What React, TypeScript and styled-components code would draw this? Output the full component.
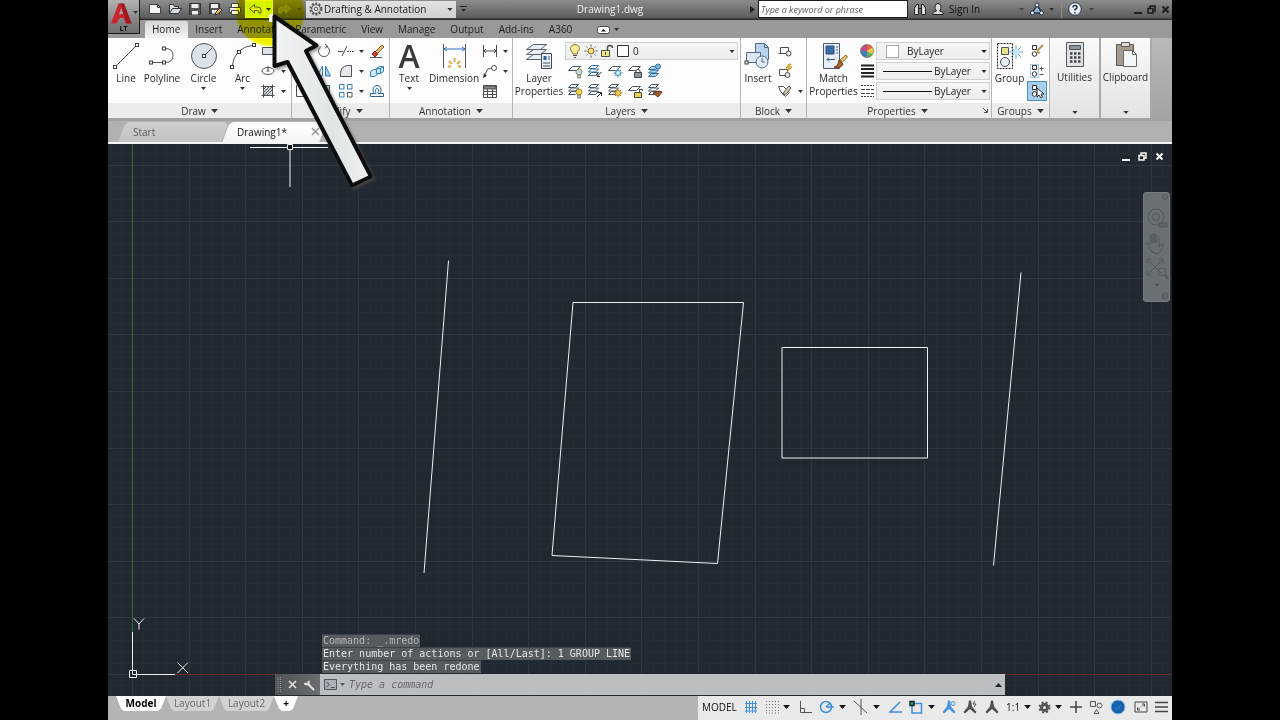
import React from 'react';
import styled, { createGlobalStyle, css } from 'styled-components';

const GlobalStyle = createGlobalStyle`
  * { box-sizing: border-box; }
  html, body { margin: 0; background: #000; }
  body, button, input, select {
    font-family: "Open Sans", "Noto Sans", sans-serif;
    font-size: 10px;
    color: #2b2b2b;
  }
  button { border: 0; padding: 0; background: none; white-space: nowrap; }
  svg { display: block; flex: none; }
`;

/* ---------- shell ---------- */

const Page = styled.div`
  min-height: 100vh;
  padding: 0 108px;
  background: #000;
  display: flex;
`;

const Window = styled.main`
  position: relative;
  flex: 1;
  min-width: 0;
  display: flex;
  flex-direction: column;
  overflow: hidden;
  background: #b1b1b1;
`;

const Header = styled.header`
  display: grid;
  grid-template-columns: 32px minmax(0, 1fr);
  background: linear-gradient(#8c8c8c 0, #5c5c5c 18px, #2e2e2e 19px, #2e2e2e 20px, #999 20px);
`;

const AppButton = styled.button`
  height: 34px;
  display: flex;
  flex-direction: column;
  border: 1px solid #1a1a1a;
  border-left: 0;
  border-top: 0;
  background: linear-gradient(#b4b4b4, #7d7d7d 24px, #707070);
`;

const AppRow = styled.span`
  display: flex;
  align-items: center;
  gap: 1px;
  height: 25px;
  padding-left: 2px;
`;

const AppEdition = styled.span`
  width: 31px;
  font-size: 7px;
  line-height: 8px;
  font-weight: 700;
  text-align: center;
  color: #111;
`;

const TitleRow = styled.div`
  display: flex;
  align-items: center;
  height: 20px;
  padding-bottom: 2px;
`;

const QuickAccess = styled.div`
  display: flex;
  align-items: center;
  padding-left: 5px;
`;

const QuickButton = styled.button<{ $w?: number; $lit?: boolean }>`
  width: ${(p) => p.$w ?? 20}px;
  height: 18px;
  display: grid;
  place-items: center;
  ${(p) => p.$lit && css`
    background: #dcff5a;
    border: 1px solid #f8ffc8;
  `}
`;

const Workspace = styled.label`
  display: flex;
  align-items: center;
  gap: 1px;
  width: 150px;
  height: 17px;
  padding: 0 3px 0 3px;
  margin-left: 4px;
  background: linear-gradient(#e2e2e2, #cfcfcf);
`;

const PlainSelect = styled.select`
  appearance: none;
  flex: 1;
  min-width: 0;
  height: 16px;
  padding: 0;
  border: 0;
  outline: 0;
  background: transparent;
  color: #1c1c1c;
  line-height: 16px;
`;

const DocTitle = styled.h1`
  flex: 1;
  margin: 0;
  font-size: 10px;
  line-height: 18px;
  font-weight: 400;
  text-align: center;
  color: #f0f0f0;
`;

const Search = styled.input`
  width: 150px;
  height: 18px;
  margin-left: 3px;
  padding: 0 2px;
  border: 1px solid #1c1c1c;
  background: #fff;
  font-size: 9px;
  font-style: italic;
  &::placeholder { color: #5c5c5c; opacity: 1; }
`;

const TitleTools = styled.div`
  display: flex;
  align-items: center;
`;

const SignIn = styled.button`
  display: flex;
  align-items: center;
  gap: 4px;
  width: 82px;
  color: #0e0e0e;
`;

const Divider = styled.span`
  width: 1px;
  height: 18px;
  background: #8a8a8a;
  margin: 0 3px;
`;

const WindowButtons = styled.div<{ $gap: number }>`
  display: flex;
  align-items: center;
  gap: ${(p) => p.$gap}px;
`;

const WindowCorner = styled.div`
  display: flex;
  justify-content: flex-end;
  width: 75px;
  padding-right: 2px;
`;

/* ---------- ribbon ---------- */

const TabRow = styled.nav`
  display: flex;
  align-items: flex-end;
  height: 18px;
  padding-left: 5px;
`;

const RibbonTab = styled.button<{ $active?: boolean }>`
  height: 17px;
  padding: 0 8px 0 7px;
  line-height: 15px;
  color: #1e1e1e;
  border-radius: 2px 2px 0 0;
  background: ${(p) => (p.$active ? 'linear-gradient(#d6d6d6, #f4f4f4)' : 'transparent')};
`;

const RibbonToggle = styled.button`
  display: flex;
  align-items: center;
  gap: 4px;
  height: 17px;
  padding: 0 0 0 17px;
`;

const Ribbon = styled.section`
  display: flex;
  height: 83px;
  padding-bottom: 3px;
  background: linear-gradient(#b9b9b9, #a2a2a2);
`;

const Panel = styled.div<{ $w: number }>`
  display: flex;
  flex-direction: column;
  flex: none;
  width: ${(p) => p.$w}px;
  border-right: 1px solid #b4b4b4;
  background: #fdfdfd;
`;

const PanelBody = styled.div`
  display: flex;
  height: 65px;
  padding-top: 3px;
`;

const PanelLabel = styled.button`
  display: flex;
  align-items: center;
  justify-content: center;
  gap: 5px;
  height: 15px;
  background: #ececec;
  line-height: 14px;
  color: #333;
`;

const LaunchLabel = styled(PanelLabel)`
  display: grid;
  grid-template-columns: 1fr auto 1fr;
  padding: 0 3px 0 0;
  gap: 0;
`;

const LabelText = styled.span<{ $end?: boolean }>`
  grid-column: ${(p) => (p.$end ? 3 : 2)};
  justify-self: ${(p) => (p.$end ? 'end' : 'center')};
  display: flex;
  align-items: center;
  gap: 5px;
`;

const Collapsed = styled.button<{ $w: number }>`
  display: flex;
  flex-direction: column;
  align-items: center;
  flex: none;
  width: ${(p) => p.$w}px;
  padding: 3px 0 4px;
  border-right: 2px solid #a9a9a9;
  background: linear-gradient(#fafafa, #e3e3e3);
  line-height: 16px;
  & > svg:last-child { margin-top: auto; }
`;

const Big = styled.button<{ $w: number }>`
  display: flex;
  flex-direction: column;
  align-items: center;
  flex: none;
  width: ${(p) => p.$w}px;
  height: 60px;
`;

const BigLabel = styled.span`
  margin: 1px 0 2px;
  line-height: 13px;
  white-space: pre-line;
  text-align: center;
`;

const Tools = styled.div<{ $cols: string }>`
  display: grid;
  grid-template-columns: ${(p) => p.$cols};
  grid-auto-rows: 20px;
`;

const Tool = styled.button<{ $on?: boolean }>`
  display: flex;
  align-items: center;
  justify-content: flex-start;
  gap: 5px;
  padding-left: 2px;
  ${(p) => p.$on && css`
    padding-left: 1px;
    border: 1px solid #4f8fc0;
    background: #a9cdec;
  `}
`;

const LayerArea = styled.div`
  display: flex;
  flex-direction: column;
  flex: 1;
  padding-right: 2px;
`;

const Combo = styled.label<{ $gap: number; $inset?: number }>`
  display: flex;
  align-items: center;
  gap: ${(p) => p.$gap}px;
  height: 18px;
  margin: 1px 0;
  padding: 0 2px 0 ${(p) => p.$inset ?? 6}px;
  border: 1px solid #d0d0d0;
  background: linear-gradient(#f6f6f6, #ededed);
`;

const Swatch = styled.span`
  width: 13px;
  height: 13px;
  border: 1px solid #a8a8a8;
  background: #fff;
`;

const PropertyGrid = styled.div`
  display: grid;
  grid-template-columns: 16px minmax(0, 1fr);
  grid-auto-rows: 20px;
  align-items: center;
  flex: 1;
  padding-right: 1px;
`;

/* ---------- document tabs ---------- */

const DocTabs = styled.nav`
  display: flex;
  height: 23px;
  padding: 1px 0 0 14px;
  border-bottom: 2px solid #f4f4f4;
  background: #b1b1b1;
`;

const DocTab = styled.button<{ $active?: boolean }>`
  position: relative;
  display: flex;
  align-items: center;
  justify-content: space-between;
  width: ${(p) => (p.$active ? 97 : 104)}px;
  padding: 0 3px 1px 11px;
  color: ${(p) => (p.$active ? '#141414' : '#5a5a5a')};
  z-index: 0;
  &::before {
    content: '';
    position: absolute;
    inset: 0 ${(p) => (p.$active ? 0 : 1)}px 0 0;
    z-index: -1;
    transform: skewX(-20deg);
    border-radius: 5px 5px 0 0;
    background: ${(p) => (p.$active ? 'linear-gradient(#fff, #f4f4f4)' : 'linear-gradient(#d0d0d0, #c2c2c2)')};
  }
`;

/* ---------- drawing area ---------- */

const Viewport = styled.section`
  position: relative;
  flex: 1;
  min-height: 552px;
  background: #212830;
`;

const Scene = styled.svg`
  position: absolute;
  inset: 0;
  width: 100%;
  height: 100%;
`;

const ViewportControls = styled.div`
  position: absolute;
  top: 8px;
  right: 8px;
`;

const NavBar = styled.div`
  position: absolute;
  top: 48px;
  right: 2px;
  width: 27px;
  height: 110px;
  border-radius: 3px;
  border: 1px solid #747a7e;
  background: #696f73;
`;

const CommandWindow = styled.form`
  position: absolute;
  left: 167px;
  right: 167px;
  bottom: 1px;
  margin: 0;
`;

const History = styled.ol`
  margin: 0 0 0 47px;
  padding: 0;
  list-style: none;
`;

const HistoryLine = styled.li<{ $old?: boolean }>`
  width: fit-content;
  padding: 0 1px;
  border-top: 1px solid #3a4147;
  font-family: "DejaVu Sans Mono", monospace;
  font-size: 10px;
  line-height: 12px;
  color: ${(p) => (p.$old ? '#b4b7b9' : '#e4e6e8')};
  background: #565b5f;
`;

const CommandBar = styled.div`
  display: flex;
  height: 21px;
  margin-top: 1px;
  background: #bcbfc2;
`;

const CommandGrip = styled.div`
  display: flex;
  align-items: center;
  justify-content: space-between;
  width: 45px;
  padding: 0 5px 0 2px;
  background: linear-gradient(90deg, #4f5356, #6a6e71);
`;

const CommandField = styled.label`
  display: flex;
  align-items: center;
  gap: 3px;
  flex: 1;
  padding: 0 3px 0 4px;
`;

const CommandInput = styled.input`
  flex: 1;
  height: 19px;
  padding: 0 0 0 1px;
  border: 0;
  outline: 0;
  background: transparent;
  font-family: "DejaVu Sans Mono", monospace;
  font-size: 10px;
  font-style: italic;
  &::placeholder { color: #65696c; opacity: 1; }
`;

/* ---------- status bar ---------- */

const StatusBar = styled.footer`
  display: flex;
  justify-content: space-between;
  height: 24px;
  background: #b4b4b4;
`;

const LayoutTabs = styled.nav`
  display: flex;
  align-items: flex-start;
  padding-left: 8px;
`;

const LayoutTab = styled.button<{ $w: number; $active?: boolean }>`
  width: ${(p) => p.$w}px;
  height: 15px;
  line-height: 15px;
  clip-path: polygon(0 0, 100% 0, calc(100% - 5px) 85%, calc(100% - 8px) 100%, 8px 100%, 5px 85%);
  background: ${(p) => (p.$active ? '#fff' : '#d2d2d2')};
  color: ${(p) => (p.$active ? '#000' : '#6a6a6a')};
  font-weight: ${(p) => (p.$active ? 700 : 400)};
`;

const StatusTools = styled.div`
  display: flex;
  align-items: center;
  justify-content: space-between;
  width: 474px;
  padding: 0 4px 2px 4px;
  background: #e9e9e9;
`;

const StatusButton = styled.button`
  display: flex;
  align-items: center;
  gap: 4px;
  height: 20px;
  color: #111;
`;

const Overlay = styled.svg<{ $blend?: boolean }>`
  position: absolute;
  top: 0;
  left: 120px;
  pointer-events: none;
  z-index: 2;
  mix-blend-mode: ${(p) => (p.$blend ? 'multiply' : 'normal')};
`;

/* ---------- icons ---------- */

type IconProps = { w?: number; h?: number; sw?: number; color?: string; children: React.ReactNode };
const Icon = ({ w = 16, h = 16, sw = 1, color = '#4a4f55', children }: IconProps) => (
  <svg width={w} height={h} viewBox={`0 0 ${w} ${h}`} fill="none" stroke={color} strokeWidth={sw} aria-hidden="true">
    {children}
  </svg>
);

const Caret = ({ w = 5, color = '#333' }: { w?: number; color?: string }) => (
  <svg width={w} height={Math.ceil(w / 2)} viewBox="0 0 6 3.5" aria-hidden="true">
    <path d="M0 0h6L3 3.5z" fill={color} />
  </svg>
);

const Node = ({ x, y }: { x: number; y: number }) => (
  <rect x={x - 1.5} y={y - 1.5} width="3" height="3" fill="#fff" stroke="#3b3b3b" />
);

const Sheets = ({ y = 0, c = '#4a5664', f = '#fff' }: { y?: number; c?: string; f?: string }) => (
  <g stroke={c} fill={f} transform={`translate(0 ${y})`}>
    <path d="M1.5 11.5l3-3h7l-3 3z" />
    <path d="M1.5 8l3-3h7l-3 3z" />
    <path d="M1.5 4.5l3-3h7l-3 3z" />
  </g>
);

const OneSheet = () => <path d="M1.5 7.5l4-4h8l-4 4z" stroke="#4a5664" fill="#fff" />;

const Bulb = ({ x, y, c = '#f3d34a' }: { x: number; y: number; c?: string }) => (
  <g transform={`translate(${x} ${y})`}>
    <circle r="3" fill={c} stroke="#8d7a2a" strokeWidth=".8" />
    <path d="M-1.5 3h3v3h-3z" fill="#c9c9c9" stroke="#666" strokeWidth=".7" />
  </g>
);

const WinMin = ({ c }: { c: string }) => <Icon w={9} h={9} color={c} sw={2}><path d="M1 8h8" /></Icon>;
const WinRestore = ({ c }: { c: string }) => (
  <Icon w={9} h={9} color={c} sw={1.5}><path d="M1 3.5h5v4.500h-5zM3 3V1h5v5H6" /></Icon>
);
const WinClose = ({ c }: { c: string }) => <Icon w={9} h={9} color={c} sw={2}><path d="M1.500 1.500l6 6M7.500 1.500l-6 6" /></Icon>;

const Cube = () => (
  <g stroke="#2f7fb8" fill="#cfe6f6"><path d="M1.500 8.500l3-2h4v5l-3 2h-4z" /><path d="M7.500 5.500l3-2h4v5l-3 2h-4z" /><path d="M7.500 5.500h4v5M11.500 5.500l3-2" /></g>
);

const Spark = ({ c = '#e8b32e', s = '#b98314' }: { c?: string; s?: string }) => (
  <g stroke={s}><path d="M11 5.500v9M6.500 10h9M8 7l6 6M14 7l-6 6" /><circle cx="11" cy="10" r="2.500" fill={c} /></g>
);

const Lock = ({ c, open }: { c: string; open?: boolean }) => (
  <g stroke="#444"><path d="M7.500 9.500h7v5h-7z" fill={c} /><path d={open ? 'M12.500 9V6.500h3v1.500' : 'M9 9V7.500q2-2.500 4 0V9'} /></g>
);

const Pair = () => <g stroke="#333"><path d="M3.500 2.500h4v4h-4z" fill="#fff" /><circle cx="5.500" cy="11" r="2.300" fill="#fff" /></g>;

const Compass = ({ c, mark }: { c: string; mark?: React.ReactNode }) => (
  <Icon w={14} h={14} color={c}>
    <path d="M6 0.500h2l1 6 4.500 5.500-1.500 1.500L7 9l-5 4.500L.5 12 5 6.500z" fill={c} stroke="none" />
    {mark}
  </Icon>
);

/* ---------- panels ---------- */

const DrawPanel = () => (
  <Panel $w={184}>
    <PanelBody>
      <Big $w={36}>
        <Icon w={30} h={30}><path d="M4 26L26 4" stroke="#555" /><Node x={4} y={26} /><Node x={26} y={4} /></Icon>
        <BigLabel>Line</BigLabel>
      </Big>
      <Big $w={36}>
        <Icon w={30} h={30}><path d="M4 21.500h14q8 0 8-7t-8-7" stroke="#555" /><Node x={4} y={21.500} /><Node x={17} y={21.500} /><Node x={17} y={7.500} /></Icon>
        <BigLabel>Polyline</BigLabel>
      </Big>
      <Big $w={47}>
        <Icon w={30} h={30}><circle cx="15" cy="15" r="12.500" fill="#dde3ea" stroke="#4b5057" /><path d="M15 15l8-8" /><Node x={15} y={15} /></Icon>
        <BigLabel>Circle</BigLabel><Caret />
      </Big>
      <Big $w={31}>
        <Icon w={30} h={30}><path d="M4 26Q6 6 26 4" stroke="#555" /><Node x={4} y={26} /><Node x={11} y={11} /><Node x={26} y={4} /></Icon>
        <BigLabel>Arc</BigLabel><Caret />
      </Big>
      <Tools $cols="30px">
        <Tool aria-label="Rectangle"><Icon><path d="M2.500 4.500h11v7h-11z" fill="#dde3ea" /></Icon><Caret /></Tool>
        <Tool aria-label="Ellipse"><Icon><ellipse cx="8" cy="8" rx="6" ry="3.500" /><path d="M8 3v5M6.500 8h3" /></Icon><Caret /></Tool>
        <Tool aria-label="Hatch"><Icon><path d="M3.500 3.500h9v9h-9z" fill="#d6dade" /><path d="M3 7l4-4M3 10l7-7M4 12l8-8M7 12l5-5M1.500 3.500h2v-2M14.500 3.500h-2v-2M1.500 12.500h2v2M14.500 12.500h-2v2" /></Icon><Caret /></Tool>
      </Tools>
    </PanelBody>
    <PanelLabel>Draw <Caret w={7} /></PanelLabel>
  </Panel>
);

const ModifyPanel = () => (
  <Panel $w={98}>
    <PanelBody>
      <Tools $cols="22px 22px 31px 20px">
        <Tool aria-label="Move"><Icon><path d="M8 2v12M2 8h12M6 4l2-2 2 2M6 12l2 2 2-2" /></Icon></Tool>
        <Tool aria-label="Rotate"><Icon><path d="M5 3.500A5.500 5.500 0 1 0 10 3M9 1l2.500 2L9 5.500" /></Icon></Tool>
        <Tool aria-label="Trim"><Icon><path d="M0 8.500h5M9 8.500h2M12 8.500h1M14 8.500h2M4 13l5-10" /></Icon><Caret /></Tool>
        <Tool aria-label="Erase"><Icon><path d="M6 9l7-7 2 2-7 7z" fill="#e8c27a" stroke="#8a5a20" /><path d="M3 11l3-3 3 3-3 3z" fill="#c8402c" stroke="#8a2a20" /><path d="M1 14.500h12" /></Icon></Tool>
        <Tool aria-label="Copy"><Icon><circle cx="5" cy="9" r="3" /><circle cx="11" cy="5" r="3" /></Icon></Tool>
        <Tool aria-label="Mirror"><Icon color="#2f7fb8"><path d="M6.500 3v10h-5z" fill="#fff" /><path d="M9.500 3v10h5z" fill="#a9d0ee" /></Icon></Tool>
        <Tool aria-label="Fillet"><Icon><path d="M2.500 13.500v-3q0-7 7-8h4v11z" fill="#e6e9ec" /></Icon><Caret /></Tool>
        <Tool aria-label="Explode"><Icon><Cube /></Icon></Tool>
        <Tool aria-label="Stretch"><Icon><path d="M2.500 2.500h8v11h-8z" /></Icon></Tool>
        <Tool aria-label="Scale"><Icon><path d="M2.500 2.500h11v11h-11z" fill="#a9cfe4" /></Icon></Tool>
        <Tool aria-label="Array"><Icon color="#2f7fb8"><path d="M1.500 1.500h4.500v4.500h-4.500zM9.500 1.500h4.500v4.500h-4.500zM1.500 9.500h4.500v4.500h-4.500z" /><path d="M9.500 9.500h4.500v4.500h-4.500z" stroke="#555" /></Icon><Caret /></Tool>
        <Tool aria-label="Offset"><Icon><path d="M1.500 13.500h13M1.500 13.500v-3h3q-2-8 3.500-8t3.500 8h3v3" stroke="#2f5f8a" /><path d="M5 10.500h2q-1.500-5 1-5t1 5h2" stroke="#2f7fb8" /></Icon></Tool>
      </Tools>
    </PanelBody>
    <PanelLabel>Modify <Caret w={7} /></PanelLabel>
  </Panel>
);

const BigA = styled.span`
  height: 30px;
  font-size: 32px;
  line-height: 30px;
  font-weight: 600;
  color: #3a3a3a;
`;

const AnnotationPanel = () => (
  <Panel $w={123}>
    <PanelBody>
      <Big $w={38}><BigA>A</BigA><BigLabel>Text</BigLabel><Caret /></Big>
      <Big $w={52}>
        <Icon w={30} h={30}>
          <path d="M4.500 3v24M26.500 3v24" stroke="#555" />
          <path d="M5 8h21M8 6L5 8l3 2M23 6l3 2-3 2" stroke="#2a6fc0" />
          <path d="M9 26l3-1M10 20l3 3M15.500 17v4M21 20l-3 3M22 26l-3-1" stroke="#d7b04a" strokeWidth="2" />
        </Icon>
        <BigLabel>Dimension</BigLabel>
      </Big>
      <Tools $cols="32px">
        <Tool aria-label="Linear dimension"><Icon><path d="M1.500 2v12M14.500 2v12M2 8h12M4 6L2 8l2 2M12 6l2 2-2 2" /></Icon><Caret /></Tool>
        <Tool aria-label="Leader"><Icon><circle cx="12" cy="5" r="2.500" /><path d="M9.500 5.500Q5 5 4.500 8T2 13" /><path d="M1 15l1-5 3 3z" fill="#333" stroke="none" /></Icon><Caret /></Tool>
        <Tool aria-label="Table"><Icon><path d="M1.500 2.500h13v12h-13z" fill="#fff" /><path d="M2 3h12v3H2z" fill="#888" /><path d="M2 8.500h12M2 11.500h12M5.500 6v8M10.500 6v8" /></Icon></Tool>
      </Tools>
    </PanelBody>
    <PanelLabel>Annotation <Caret w={7} /></PanelLabel>
  </Panel>
);

const LayersPanel = () => (
  <Panel $w={228}>
    <PanelBody>
      <Big $w={52}>
        <Icon w={30} h={30}>
          <g stroke="#55616e" fill="#eef1f4"><path d="M2.500 18.500l7-5h13l-6 5z" /><path d="M2.500 13.500l7-5h13l-6 5z" /><path d="M2.500 8.500l7-5h13l-6 5z" /></g>
          <path d="M17.500 12.500h10v15h-10z" fill="#e8f0f8" stroke="#445" /><path d="M19.500 15h3v4h-3z" fill="#2a5fa0" stroke="none" /><path d="M24 16h2M24 18h2M19 22h7M19 25h7" />
        </Icon>
        <BigLabel>{'Layer\nProperties'}</BigLabel>
      </Big>
      <LayerArea>
        <Combo $gap={0} $inset={2}>
          <Icon w={14}><path d="M4 9Q2 7 2.500 4.500 3.500 1.500 7 1.500t4.500 3Q12 7 9.500 9v2H5z" fill="#f8ec9a" stroke="#8d7a2a" /><path d="M5 12.500h4M6 14.500h2" /></Icon>
          <Icon w={18}><circle cx="9" cy="8" r="3" fill="#f8e27a" stroke="#7d6a2a" /><path d="M9 1.500v2M9 12.500v2M2.500 8h2M13.500 8h2M4.500 3.500l1 1M12.500 11.500l1 1M13.500 3.500l-1 1M5.500 11.500l-1 1" /></Icon>
          <Icon w={16}><path d="M1.500 7.500h8v6h-8z" fill="#f1e68a" /><path d="M7.500 7V4.500q0-2 2.500-2t2.500 2.500" strokeWidth="1.500" /><path d="M5.500 9v3" /></Icon>
          <Icon w={17}><path d="M1.500 2.500h11v11h-11z" fill="#fff" stroke="#333" /></Icon>
          <PlainSelect aria-label="Layer"><option>0</option></PlainSelect>
          <Caret w={6} />
        </Combo>
        <Tools $cols="repeat(5, 20px)">
          <Tool aria-label="Layer off"><Icon><OneSheet /><Bulb x={12} y={9} c="#bcd8ee" /></Icon></Tool>
          <Tool aria-label="Isolate"><Icon><Sheets y={1} c="#2f6f9c" /><path d="M14.500 9l-4 4M10 10.500v3h3" stroke="#333" /></Icon></Tool>
          <Tool aria-label="Freeze"><Icon><OneSheet /><Spark c="#dceefa" s="#3f8fc4" /></Icon></Tool>
          <Tool aria-label="Lock layer"><Icon><OneSheet /><Lock c="#8e979e" /></Icon></Tool>
          <Tool aria-label="Make current"><Icon><Sheets y={2} c="#2f6f9c" f="#a9d0ee" /><circle cx="11" cy="3.500" r="2.500" fill="#7ab6e0" stroke="#2f6f9c" /></Icon></Tool>
          <Tool aria-label="Turn all on"><Icon><Sheets /><Bulb x={12} y={9} /></Icon></Tool>
          <Tool aria-label="Unisolate"><Icon><Sheets c="#44607c" /><path d="M10 14l4-4M11 9.500h3.500V13" stroke="#222" /></Icon></Tool>
          <Tool aria-label="Thaw all"><Icon><Sheets /><Spark c="#f4d25a" /></Icon></Tool>
          <Tool aria-label="Unlock layer"><Icon><OneSheet /><Lock c="#e9cf4c" open /></Icon></Tool>
          <Tool aria-label="Match layer"><Icon><Sheets /><path d="M6 10l5 4 4-5-3-1z" fill="#a65a2c" stroke="#6d3a1a" /></Icon></Tool>
        </Tools>
      </LayerArea>
    </PanelBody>
    <PanelLabel>Layers <Caret w={7} /></PanelLabel>
  </Panel>
);

const BlockPanel = () => (
  <Panel $w={66}>
    <PanelBody>
      <Big $w={34}>
        <Icon w={30} h={30}>
          <path d="M12.500 2.500h9l4 4v12h-13z" fill="#b9d2ee" stroke="#4c6a8c" /><path d="M21.500 2.500v4h4" stroke="#4c6a8c" />
          <path d="M3.500 11.500h14v10h-14z" fill="#dce6f2" stroke="#4c6a8c" /><circle cx="19" cy="21" r="6" fill="#e4ebf4" stroke="#4c6a8c" /><path d="M19 17v4h3" stroke="#4c6a8c" /><Node x={3.500} y={21.500} />
        </Icon>
        <BigLabel>Insert</BigLabel>
      </Big>
      <Tools $cols="30px">
        <Tool aria-label="Create block"><Icon><path d="M3.500 4.500h8v6h-8z" fill="#fff" /><circle cx="11.500" cy="10.500" r="2.500" fill="#e4e8ec" /><path d="M1.500 10.500h3" /></Icon></Tool>
        <Tool aria-label="Edit block"><Icon><path d="M2.500 6.500h8v6h-8z" fill="#fff" /><circle cx="10.500" cy="12" r="2.500" fill="#e4e8ec" /><path d="M12 1l-3 4h3l-2 4 5-5h-3l2-3z" fill="#f0b92c" stroke="#b98314" strokeWidth=".6" /></Icon></Tool>
        <Tool aria-label="Edit attributes"><Icon><path d="M1.500 3.500h5l6 6-4 4-5-5z" fill="#fff" /><path d="M7 9l5-6 2 2-5 6-3 1z" fill="#e8d9a0" /></Icon><Caret /></Tool>
      </Tools>
    </PanelBody>
    <PanelLabel>Block <Caret w={7} /></PanelLabel>
  </Panel>
);

const PropertiesPanel = () => (
  <Panel $w={185}>
    <PanelBody>
      <Big $w={53}>
        <Icon w={30} h={30}>
          <path d="M4.500 2.500h16v25h-16z" fill="#e8eff7" stroke="#4c5a6a" /><path d="M7 5h8v8H7z" fill="#3b6ea8" stroke="#2a4c78" /><path d="M17 6h2M17 9h2M17 12h2M8 18.500h8M10 16.500l-2 2 2 2" stroke="#3b5a80" />
          <path d="M21 19l6-5 1.500 2-5 5z" fill="#e8c27a" stroke="#8a6a30" /><path d="M15 26q4 0 5-7l4 4q-2 5-9 3z" fill="#a8682c" stroke="#6d3a1a" />
        </Icon>
        <BigLabel>{'Match\nProperties'}</BigLabel>
      </Big>
      <PropertyGrid>
        <svg width="14" height="14" viewBox="-7 -7 14 14" aria-hidden="true">
          <path d="M0 0L-6.500 0A6.500 6.500 0 0 1 0-6.500z" fill="#c44a86" /><path d="M0 0V-6.500A6.500 6.500 0 0 1 5.600-3.200z" fill="#e06a3c" /><path d="M0 0L5.600-3.200A6.500 6.500 0 0 1 5.600 3.200z" fill="#f0c43a" />
          <path d="M0 0L5.600 3.200A6.500 6.500 0 0 1 0 6.500z" fill="#69b34c" /><path d="M0 0V6.500A6.500 6.500 0 0 1-6.500 0z" fill="#3f7cc4" /><circle r="6.500" fill="none" stroke="#555" strokeWidth=".6" />
        </svg>
        <Combo $gap={8} $inset={9}><Swatch /><PlainSelect aria-label="Object colour"><option>ByLayer</option></PlainSelect><Caret w={6} color="#111" /></Combo>
        <svg width="14" height="14" aria-hidden="true"><path d="M1 1.500h13M1 5h13M1 9h13M1 12.500h13" stroke="#222" strokeWidth="2" /></svg>
        <Combo $gap={2}><Icon w={49} h={3} color="#111"><path d="M0 1.500h49" /></Icon><PlainSelect aria-label="Lineweight"><option>ByLayer</option></PlainSelect><Caret w={6} /></Combo>
        <svg width="14" height="14" aria-hidden="true"><path d="M1 1.500h13M1 12.500h13" stroke="#444" strokeDasharray="2 1" /><path d="M1 5.500h13M1 9.500h13" stroke="#444" strokeDasharray="4 1" /></svg>
        <Combo $gap={2}><Icon w={49} h={3} color="#111"><path d="M0 1.500h49" /></Icon><PlainSelect aria-label="Linetype"><option>ByLayer</option></PlainSelect><Caret w={6} /></Combo>
      </PropertyGrid>
    </PanelBody>
    <LaunchLabel>
      <LabelText>Properties <Caret w={7} /></LabelText>
      <LabelText $end><Icon w={5} h={5}><path d="M0 0l4 4M4.500 1v3.500H1" /></Icon></LabelText>
    </LaunchLabel>
  </Panel>
);

const GroupsPanel = () => (
  <Panel $w={58}>
    <PanelBody>
      <Big $w={35}>
        <Icon w={30} h={30}>
          <path d="M2.500 2.500h15v25h-15z" stroke="#222" strokeDasharray="2 1" /><path d="M6.500 6.500h7v7h-7z" fill="#e9e28a" stroke="#555" /><circle cx="10" cy="21" r="4.500" fill="#e3eef5" stroke="#446" />
          <path d="M21 4v14M14 11h14M16 6l10 10M26 6L16 16" stroke="#5fb0dc" /><circle cx="21" cy="11" r="3" fill="#c7e6f7" stroke="none" />
        </Icon>
        <BigLabel>Group</BigLabel>
      </Big>
      <Tools $cols="20px">
        <Tool aria-label="Ungroup"><Icon><Pair /><path d="M8 8l6-6M8 9l3 1" stroke="#b09a4a" strokeWidth="2" /></Icon></Tool>
        <Tool aria-label="Group edit"><Icon><path d="M1.500 1.500h8v13h-8z" stroke="#4f9fd0" strokeDasharray="1 1" /><Pair /><path d="M10.500 5.500h4M12.500 3.500v4M10.500 11.500h4" /></Icon></Tool>
        <Tool $on aria-label="Group selection"><Icon><Pair /><path d="M8 5v9l2-2 2 3 1.500-1L12 11h3z" fill="#fff" stroke="#333" /></Icon></Tool>
      </Tools>
    </PanelBody>
    <PanelLabel>Groups <Caret w={7} /></PanelLabel>
  </Panel>
);

const QuickIcons = () => (
  <QuickAccess>
    <QuickButton aria-label="New"><Icon w={14} h={14} color="#444"><path d="M1.500 2.500h8l3 3v6h-11z" fill="#f4f4f4" /><path d="M9.500 2.500v3h3" /></Icon></QuickButton>
    <QuickButton aria-label="Open"><Icon w={14} h={14} color="#333"><path d="M1.500 11.500v-9h4l1 2h4v2" fill="#ddd" /><path d="M1.500 11.500l3-5h9l-3 5z" fill="#d2dbe6" /></Icon></QuickButton>
    <QuickButton aria-label="Save"><Icon w={14} h={14} color="#333"><path d="M1.500 1.500h11v11h-11z" fill="#555" /><path d="M3.500 2h7v4h-7zM4 9h6v3.500H4z" fill="#eee" stroke="none" /></Icon></QuickButton>
    <QuickButton aria-label="Save as"><Icon w={14} h={14} color="#333"><path d="M1.500 1.500h10v10h-10z" fill="#555" /><path d="M3 2h7v4H3zM4 8h5v3.500H4z" fill="#eee" stroke="none" /><path d="M7 13l1-3 4-4 2 2-4 4z" fill="#e6b84a" /></Icon></QuickButton>
    <QuickButton aria-label="Plot"><Icon w={14} h={14} color="#444"><path d="M1.500 5.500h11v5h-11z" fill="#eee" /><path d="M3.500 1.500h7v4h-7zM3.500 8.500h7v4h-7z" fill="#fff" /></Icon></QuickButton>
    <QuickButton $lit $w={19} aria-label="Undo"><Icon w={14} h={14} color="#55601a"><path d="M1.500 6.500l5-4v2.500h3q3.500 0 3.500 3v3h-2q0-2.500-2-2.500H6.500V11z" fill="#f4f7c8" /></Icon></QuickButton>
    <QuickButton $lit $w={9} aria-label="Undo list"><Caret color="#333" /></QuickButton>
    <QuickButton $w={23} aria-label="Redo"><Icon w={14} h={14} color="#a0a050"><path d="M12.500 6.500l-5-4v2.500h-3Q1 5 1 8v3h2q0-2.500 2-2.500h2.500V11z" fill="#8c8c50" /></Icon></QuickButton>
    <QuickButton $w={6} aria-label="Redo list"><Caret color="#555" /></QuickButton>
  </QuickAccess>
);

const columns = Array.from({ length: 96 }, (_, i) => i - 2);
const rows = Array.from({ length: 52 }, (_, i) => i - 2);
const STEP = 11.32;
const gridStroke = (i: number) => (i % 5 === 0 ? '#2d3741' : '#242c34');

const Drawing = () => (
  <Scene viewBox="108 144 1064 552" preserveAspectRatio="xMinYMin slice" fill="none" stroke="#eef0f2" role="img" aria-label="Model space">
    {columns.map((i) => (
      <path key={`c${i}`} d={`M${Math.round(132 + i * STEP) + 0.5} 144v552`} stroke={gridStroke(i)} />
    ))}
    {rows.map((i) => (
      <path key={`r${i}`} d={`M108 ${Math.round(674 - i * STEP) + 0.5}h1064`} stroke={gridStroke(i)} />
    ))}
    <path d="M132.500 144v488" stroke="#2f6a37" />
    <path d="M175 674.500h997" stroke="#6b2730" />
    <path d="M448.500 260.500L424 573M573 302.500H743.500L717.500 563.500L552 555.500zM782 347.500H927.500V458H782zM1021 272.500L993.500 565.500" />
    <path d="M250 147.500h78M290 147v40" />
    <path d="M287.500 144.500h5v5h-5z" fill="#111" />
    <path d="M132.500 632v42M132.500 674.500H175M129.500 670.500h7v7h-7z" />
    <path d="M134 618.500l5 5.500 5-5.500M139 624v5.500M177.500 662.500l10.500 10.500M188 662.500l-10.500 10.500" />
  </Scene>
);

const ribbonTabs = ['Insert', 'Annotate', 'Parametric', 'View', 'Manage', 'Output', 'Add-ins', 'A360'];

export default function App() {
  return (
    <Page>
      <GlobalStyle />
      <Window>
        <Header>
          <AppButton aria-label="Application menu">
            <AppRow>
              <Icon w={22} h={22}>
                <path d="M1 21.500L8.500 1.500H14L21.500 21.500H15.500L13.500 16Q9 15 6.500 21.500z" fill="#c4242c" stroke="none" />
                <path d="M14 1.500L21.500 21.500H17L10.500 1.500z" fill="#9c1a22" stroke="none" />
                <path d="M9 12.500L11.200 6l2 6z" fill="#a8a0a0" stroke="none" />
              </Icon>
              <Caret />
            </AppRow>
            <AppEdition>LT</AppEdition>
          </AppButton>
          <div>
            <TitleRow>
              <QuickIcons />
              <Workspace>
                <Icon w={14} h={14} color="#555"><circle cx="7" cy="7" r="5.500" strokeWidth="2" strokeDasharray="2 1.500" /><circle cx="7" cy="7" r="4.300" fill="#e8e8e8" /><circle cx="7" cy="7" r="1.800" /></Icon>
                <PlainSelect aria-label="Workspace"><option>Drafting &amp; Annotation</option></PlainSelect>
                <Caret w={6} />
              </Workspace>
              <QuickButton $w={14} aria-label="Customize toolbar"><Icon w={7} h={6} color="#222"><path d="M0 .5h7" /><path d="M1 3h5L3.500 5.500z" fill="#222" stroke="none" /></Icon></QuickButton>
              <DocTitle>Drawing1.dwg</DocTitle>
              <Icon w={5} h={7}><path d="M0 0l5 3.500L0 7z" fill="#222" stroke="none" /></Icon>
              <Search aria-label="Search help" placeholder="Type a keyword or phrase" />
              <TitleTools>
                <QuickButton $w={23} aria-label="Find"><Icon w={14} h={14} color="#222"><path d="M1.500 12.500v-6l2-4h2v10zM12.500 12.500v-6l-2-4h-2v10z" fill="#ddd" /><path d="M5.500 6.500h3" /></Icon></QuickButton>
                <SignIn>
                  <Icon w={14} h={14} color="#222"><path d="M1.500 12.500q0-3 4-3.500-2-2-1.500-5Q5 1.500 7 1.500t3 2.500q.5 3-1.500 5 4 .5 4 3.500z" fill="#ddd" /></Icon>Sign In
                </SignIn>
                <QuickButton $w={16} aria-label="Account"><Caret color="#444" /></QuickButton>
                <QuickButton $w={15} aria-label="A360"><Icon w={14} h={14} color="#23354c"><path d="M7 3l5 8H2z" strokeWidth="1.500" fill="#9db4d0" /><circle cx="7" cy="3" r="2" fill="#dbe6f4" /><circle cx="2.500" cy="11" r="2" fill="#dbe6f4" /><circle cx="11.500" cy="11" r="2" fill="#dbe6f4" /></Icon></QuickButton>
                <QuickButton $w={14} aria-label="A360 menu"><Caret color="#333" /></QuickButton>
                <Divider />
                <QuickButton $w={20} aria-label="Help"><Icon w={14} h={14} color="#22344c"><circle cx="7" cy="7" r="6.300" fill="#e8eef6" /><path d="M5 5.500q0-2 2-2t2 2q0 1-2 2v1M7 10v1.500" strokeWidth="1.500" /></Icon></QuickButton>
                <QuickButton $w={12} aria-label="Help menu"><Caret color="#444" /></QuickButton>
              </TitleTools>
              <WindowCorner>
                <WindowButtons $gap={5}>
                  <button aria-label="Minimize"><WinMin c="#1c1c1c" /></button>
                  <button aria-label="Restore"><WinRestore c="#1c1c1c" /></button>
                  <button aria-label="Close"><WinClose c="#1c1c1c" /></button>
                </WindowButtons>
              </WindowCorner>
            </TitleRow>
            <TabRow>
              <RibbonTab $active>Home</RibbonTab>
              {ribbonTabs.map((t) => <RibbonTab key={t}>{t}</RibbonTab>)}
              <RibbonToggle aria-label="Minimize ribbon">
                <Icon w={13} h={8} color="#444"><rect x=".5" y=".5" width="12" height="7" rx="2" fill="#fff" /><path d="M4 5.500h5L6.500 3z" fill="#222" stroke="none" /></Icon>
                <Caret />
              </RibbonToggle>
            </TabRow>
          </div>
        </Header>

        <Ribbon>
          <DrawPanel />
          <ModifyPanel />
          <AnnotationPanel />
          <LayersPanel />
          <BlockPanel />
          <PropertiesPanel />
          <GroupsPanel />
          <Collapsed $w={51}>
            <Icon w={28} h={28}>
              <path d="M5.500 1.500h17v24h-17z" fill="#dfe3e8" stroke="#555" /><path d="M8.500 4.500h11v4h-11z" fill="#8d949b" />
              <path d="M9 12.500h2.500M13 12.500h2.500M17 12.500h2.500M9 16.500h2.500M13 16.500h2.500M17 16.500h2.500M9 20.500h2.500M13 20.500h2.500M17 20.500h2.500" stroke="#444" strokeWidth="2.500" />
            </Icon>
            Utilities
            <Caret w={6} />
          </Collapsed>
          <Collapsed $w={51}>
            <Icon w={28} h={28}>
              <path d="M4.500 3.500h17v21h-17z" fill="#a39a90" stroke="#5b554f" /><path d="M9.500 1.500h8v4h-8z" fill="#ddd" stroke="#555" />
              <path d="M11.500 9.500h9l4 4v12h-13z" fill="#f4f5f7" stroke="#666" /><path d="M20.500 9.500v4h4" stroke="#666" />
            </Icon>
            Clipboard
            <Caret w={6} />
          </Collapsed>
        </Ribbon>

        <DocTabs>
          <DocTab>Start</DocTab>
          <DocTab $active>Drawing1* <Icon w={9} h={9} color="#999"><path d="M1 1l7 7M8 1L1 8" strokeWidth="1.500" /></Icon></DocTab>
        </DocTabs>

        <Viewport>
          <Drawing />
          <ViewportControls>
            <WindowButtons $gap={8}>
              <button aria-label="Minimize drawing"><WinMin c="#f4f4f4" /></button>
              <button aria-label="Restore drawing"><WinRestore c="#f4f4f4" /></button>
              <button aria-label="Close drawing"><WinClose c="#f4f4f4" /></button>
            </WindowButtons>
          </ViewportControls>
          <NavBar>
            <Icon w={25} h={108} color="#50565a">
              <circle cx="21" cy="4" r="2.500" /><circle cx="12" cy="24" r="8" /><circle cx="12" cy="24" r="3.500" /><path d="M15 30h8v4h-8z" fill="#5d6367" />
              <path d="M8 59q-4-6-6-9 2-1 4 2V43q2-1 2 1v6-9q2-1 2 1v8-9q2-1 2 1v8-7q2-1 3 1v10l3-3q2 0 1 2-2 6-5 8z" />
              <path d="M4 67l14 14M18 67L4 81M3 70v-4h4M15 66h4v4M3 78v4h4" /><circle cx="18" cy="79" r="4" /><path d="M21 82l3 4" strokeWidth="2" />
              <path d="M11 91h4l-2 2z" fill="#444" /><circle cx="21" cy="103" r="3" /><path d="M19 103h4" />
            </Icon>
          </NavBar>
          <CommandWindow>
            <History>
              <HistoryLine $old>Command: _.mredo</HistoryLine>
              <HistoryLine>Enter number of actions or [All/Last]: 1 GROUP LINE</HistoryLine>
              <HistoryLine>Everything has been redone</HistoryLine>
            </History>
            <CommandBar>
              <CommandGrip>
                <Icon w={5} h={18} color="#999"><path d="M1 1v16M3.500 1v16" strokeDasharray="1 1" /></Icon>
                <Icon w={9} h={9} color="#e4e4e4" sw={1.5}><path d="M1 1l7 7M8 1L1 8" /></Icon>
                <Icon w={12} h={12} color="#e4e4e4" sw={2}><path d="M5 5l6 6" /><path d="M1.500 4q1 2 3 1t1-3" /></Icon>
              </CommandGrip>
              <CommandField>
                <Icon w={13} h={13} color="#4e565e"><path d="M.5 1.500h12v10H.5z" fill="#a9afb5" /><path d="M2.500 4l3 2.500-3 2.500M7 9.500h4" /></Icon>
                <Caret color="#555" />
                <CommandInput aria-label="Command" placeholder="Type a command" />
                <svg width="7" height="4" aria-hidden="true"><path d="M0 4h7L3.500 0z" fill="#222" /></svg>
              </CommandField>
            </CommandBar>
          </CommandWindow>
        </Viewport>

        <StatusBar>
          <LayoutTabs>
            <LayoutTab $w={50} $active>Model</LayoutTab>
            <LayoutTab $w={53}>Layout1</LayoutTab>
            <LayoutTab $w={55}>Layout2</LayoutTab>
            <LayoutTab $w={24} $active aria-label="New layout">+</LayoutTab>
          </LayoutTabs>
          <StatusTools>
            <StatusButton>MODEL</StatusButton>
            <StatusButton aria-label="Grid"><Icon w={14} h={14} color="#3f8fe0"><path d="M2.500 1v12M5.500 1v12M8.500 1v12M11.500 1v12M1 3.500h12M1 7.500h12M1 11h12" /></Icon></StatusButton>
            <StatusButton aria-label="Snap"><Icon w={14} h={14} color="#777"><path d="M1 1.500h13M1 4.500h13M1 7.500h13M1 10.500h13M1 13h13" strokeDasharray="1 2" /></Icon><Caret w={7} color="#111" /></StatusButton>
            <StatusButton aria-label="Ortho"><Icon w={14} h={14} color="#555"><path d="M2.500 1v11.500H14M2.500 8.500h4v4" /></Icon></StatusButton>
            <StatusButton aria-label="Polar tracking"><Icon w={16} h={14} color="#3f8fd8" sw={1.5}><circle cx="7" cy="7" r="5.500" /><path d="M7 7h8M7 7l4-4" /></Icon><Caret w={7} color="#111" /></StatusButton>
            <StatusButton aria-label="Isometric drafting"><Icon w={16} h={16} color="#555"><path d="M1 2l13 12M8 0v16" /></Icon><Caret w={7} color="#111" /></StatusButton>
            <StatusButton aria-label="Object tracking"><Icon w={14} h={14} color="#3f8fd8"><path d="M12 2L2 12h12" strokeWidth="1.500" /></Icon></StatusButton>
            <StatusButton aria-label="Object snap"><Icon w={15} h={15} color="#3f8fd8" sw={1.5}><path d="M3 3.500h9.500v9.500H3z" /><path d="M1 1.500h4v4H1z" fill="#2fae4a" stroke="#123" /></Icon><Caret w={7} color="#111" /></StatusButton>
            <StatusButton aria-label="Annotation visibility"><Compass c="#4a94dc" mark={<circle cx="11" cy="3.500" r="2" fill="#e9e9e9" />} /></StatusButton>
            <StatusButton aria-label="Auto scale"><Compass c="#505050" mark={<path d="M12 1l-2 3h3l-2 3" />} /></StatusButton>
            <StatusButton aria-label="Annotation"><Compass c="#505050" /></StatusButton>
            <StatusButton>1:1 <Caret w={7} color="#111" /></StatusButton>
            <StatusButton aria-label="Workspace switching"><Icon w={13} h={13} color="#555"><circle cx="6.500" cy="6.500" r="3" strokeWidth="3" /><circle cx="6.500" cy="6.500" r="5" strokeWidth="2" strokeDasharray="2 2" /></Icon><Caret w={7} color="#111" /></StatusButton>
            <StatusButton aria-label="Annotation monitor"><Icon w={12} h={12} color="#444" sw={1.5}><path d="M6 0v12M0 6h12" /></Icon></StatusButton>
            <StatusButton aria-label="Isolate objects"><Icon w={14} h={14} color="#555"><path d="M1.500 1.500h5v5h-5zM5 13.500l2.500-4 2.500 4z" /><circle cx="10.500" cy="5.500" r="2.500" /></Icon></StatusButton>
            <StatusButton aria-label="Graphics performance"><Icon w={16} h={16}><circle cx="8" cy="8" r="7" fill="#1660ac" stroke="#8cc0ee" /><path d="M5 8.500l2 2 4-4" stroke="#4a90d8" /></Icon></StatusButton>
            <StatusButton aria-label="Clean screen"><Icon w={14} h={12} color="#444"><path d="M1 1h12v10H1zM4 8.500l2-2M3.500 6.500v2.500H6M10 3.500l-2 2M8 3h2.500v2.500" /></Icon></StatusButton>
            <StatusButton aria-label="Customization"><Icon w={13} h={12} color="#444" sw={1.5}><path d="M0 1.500h13M0 6h13M0 10.500h13" /></Icon></StatusButton>
          </StatusTools>
        </StatusBar>

        <Overlay $blend width="90" height="60" viewBox="228 0 90 60" aria-hidden="true">
          <defs>
            <radialGradient id="glow"><stop offset="0" stopColor="#f4f400" /><stop offset=".9" stopColor="#f4f400" /><stop offset="1" stopColor="#ffff40" stopOpacity="0" /></radialGradient>
          </defs>
          <circle cx="270" cy="12" r="36" fill="url(#glow)" />
        </Overlay>
        <Overlay width="150" height="196" viewBox="228 0 150 196" aria-hidden="true">
          <defs>
            <linearGradient id="shaft" x1="0" y1="0" x2="1" y2="0"><stop offset="0" stopColor="#f2f4f4" /><stop offset=".6" stopColor="#dfe5e5" /><stop offset="1" stopColor="#eef0f0" /></linearGradient>
            <filter id="shade" x="-20%" y="-20%" width="140%" height="140%"><feDropShadow dx="2" dy="2" stdDeviation="1.500" floodColor="#555" floodOpacity=".6" /></filter>
          </defs>
          <path d="M269 14h4v8h-4z" fill="#f4f4f4" />
          <path d="M274.500 16.500L316.500 45.500L306 51L371 176.500L352 185.500L287.500 62L274.500 66z" fill="url(#shaft)" stroke="#0a0a0a" strokeWidth="4" strokeLinejoin="round" filter="url(#shade)" />
        </Overlay>
      </Window>
    </Page>
  );
}
